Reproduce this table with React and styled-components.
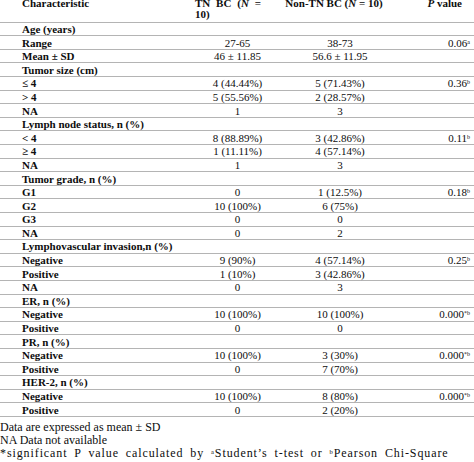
import React from "react";
import styled, { createGlobalStyle } from "styled-components";

const GlobalStyle = createGlobalStyle`
  html, body {
    margin: 0;
    padding: 0;
    background: #ffffff;
  }
  body {
    font-family: "Liberation Serif", "Times New Roman", serif;
    color: #0d0d0d;
    overflow: hidden;
  }
`;

// p values carry a superscript mark: a = Student's t-test, b = Pearson Chi-Square
const rows = [
  { label: "Age (years)" },
  { label: "Range", tn: "27-65", non: "38-73", p: "0.06", mark: "a" },
  { label: "Mean ± SD", tn: "46 ± 11.85", non: "56.6 ± 11.95" },
  { label: "Tumor size (cm)" },
  { label: "≤ 4", tn: "4 (44.44%)", non: "5 (71.43%)", p: "0.36", mark: "b" },
  { label: "> 4", tn: "5 (55.56%)", non: "2 (28.57%)" },
  { label: "NA", tn: "1", non: "3" },
  { label: "Lymph node status, n (%)" },
  { label: "< 4", tn: "8 (88.89%)", non: "3 (42.86%)", p: "0.11", mark: "b" },
  { label: "≥ 4", tn: "1 (11.11%)", non: "4 (57.14%)" },
  { label: "NA", tn: "1", non: "3" },
  { label: "Tumor grade, n (%)" },
  { label: "G1", tn: "0", non: "1 (12.5%)", p: "0.18", mark: "b" },
  { label: "G2", tn: "10 (100%)", non: "6 (75%)" },
  { label: "G3", tn: "0", non: "0" },
  { label: "NA", tn: "0", non: "2" },
  { label: "Lymphovascular invasion,n (%)" },
  { label: "Negative", tn: "9 (90%)", non: "4 (57.14%)", p: "0.25", mark: "b" },
  { label: "Positive", tn: "1 (10%)", non: "3 (42.86%)" },
  { label: "NA", tn: "0", non: "3" },
  { label: "ER, n (%)" },
  { label: "Negative", tn: "10 (100%)", non: "10 (100%)", p: "0.000", mark: "*b" },
  { label: "Positive", tn: "0", non: "0" },
  { label: "PR, n (%)" },
  { label: "Negative", tn: "10 (100%)", non: "3 (30%)", p: "0.000", mark: "*b" },
  { label: "Positive", tn: "0", non: "7 (70%)" },
  { label: "HER-2, n (%)" },
  { label: "Negative", tn: "10 (100%)", non: "8 (80%)", p: "0.000", mark: "*b" },
  { label: "Positive", tn: "0", non: "2 (20%)" },
];

export default function App() {
  return (
    <>
      <GlobalStyle />
      <Page>
        <Table>
          <HeadRow>
            <HeadCell>Characteristic</HeadCell>
            <HeadCell $narrow>
              TN BC (<i>N</i> = 10)
            </HeadCell>
            <HeadCell $center>
              Non-TN BC (<i>N</i> = 10)
            </HeadCell>
            <HeadCell $right>
              <i>P</i> value
            </HeadCell>
          </HeadRow>
          {rows.map((row, i) => (
            <Row key={i}>
              <Label>{row.label}</Label>
              <Value>{row.tn}</Value>
              <Value>{row.non}</Value>
              <PValue>
                {row.p}
                {row.mark && <Sup>{row.mark}</Sup>}
              </PValue>
            </Row>
          ))}
        </Table>
        <Notes>
          <Note>Data are expressed as mean ± SD</Note>
          <Note>NA Data not available</Note>
          <Note $wide>
            *significant P value calculated by <Sup>a</Sup>Student’s t-test or{" "}
            <Sup>b</Sup>Pearson Chi-Square
          </Note>
        </Notes>
      </Page>
    </>
  );
}

const Page = styled.div`
  width: 474px;
  height: 462px;
  overflow: hidden;
`;

const Table = styled.div`
  display: flex;
  flex-direction: column;
  margin-top: -2px;
`;

const cols = "190px 95px 110px 79px";

const HeadRow = styled.div`
  display: grid;
  grid-template-columns: ${cols};
  height: 24.7px;
  box-sizing: border-box;
  border-bottom: 1.3px solid #b4b4b4;
  font-size: 11px;
  line-height: 11px;
  font-weight: bold;
`;

const HeadCell = styled.div`
  padding-left: ${(p) => (p.$narrow ? "5px" : p.$center || p.$right ? "0" : "22px")};
  padding-right: ${(p) => (p.$narrow ? "24px" : p.$center ? "12px" : p.$right ? "12px" : "0")};
  text-align: ${(p) => (p.$narrow ? "justify" : p.$center ? "center" : p.$right ? "right" : "left")};
  ${(p) => p.$narrow && "text-align-last: left;"}
  white-space: ${(p) => (p.$narrow ? "normal" : "nowrap")};
`;

const Row = styled.div`
  display: grid;
  grid-template-columns: ${cols};
  height: 13.6px;
  box-sizing: border-box;
  border-bottom: 1.3px solid #b4b4b4;
  align-items: center;
  font-size: 11px;
  line-height: 12px;
`;

const Label = styled.div`
  padding-left: 22px;
  font-weight: bold;
  white-space: nowrap;
`;

const Value = styled.div`
  text-align: center;
  white-space: nowrap;
`;

const PValue = styled.div`
  text-align: right;
  padding-right: 4px;
  white-space: nowrap;
`;

const Sup = styled.sup`
  font-size: 0.55em;
  line-height: 0;
  vertical-align: 0.5em;
`;

const Notes = styled.div`
  padding-top: 4px;
  font-size: 12px;
  line-height: 13px;
`;

const Note = styled.div`
  white-space: nowrap;
  letter-spacing: ${(p) => (p.$wide ? "0.9px" : "0")};
  word-spacing: ${(p) => (p.$wide ? "3px" : "0")};
`;
